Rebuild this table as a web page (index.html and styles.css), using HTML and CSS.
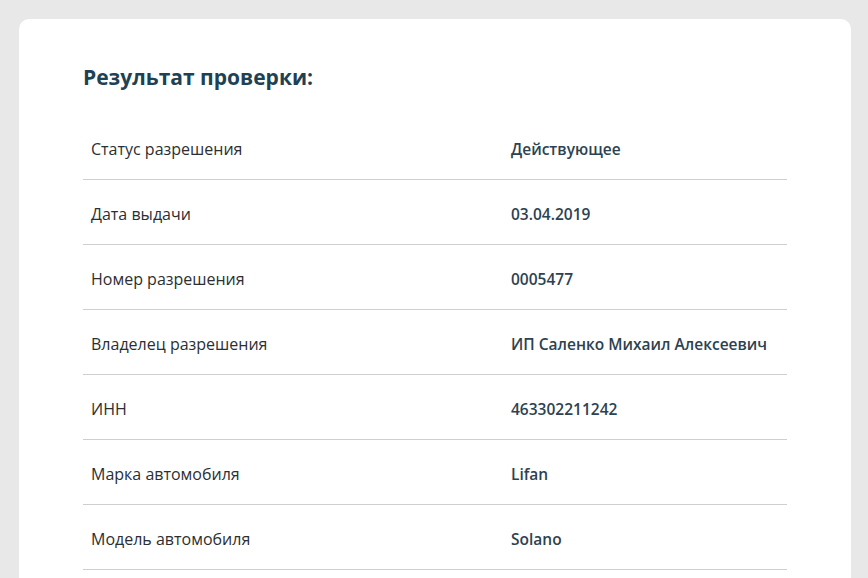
FILE: index.html
```html
<!DOCTYPE html>
<html lang="ru">
<head>
<meta charset="utf-8">
<link rel="stylesheet" href="styles.css">
</head>
<body>
<div class="card">
  <h2 class="title">Результат проверки:</h2>
  <div class="table">
    <div class="row"><div class="label">Статус разрешения</div><div class="value">Действующее</div></div>
    <div class="row"><div class="label">Дата выдачи</div><div class="value">03.04.2019</div></div>
    <div class="row"><div class="label">Номер разрешения</div><div class="value">0005477</div></div>
    <div class="row"><div class="label">Владелец разрешения</div><div class="value">ИП Саленко Михаил Алексеевич</div></div>
    <div class="row"><div class="label">ИНН</div><div class="value">463302211242</div></div>
    <div class="row"><div class="label">Марка автомобиля</div><div class="value">Lifan</div></div>
    <div class="row"><div class="label">Модель автомобиля</div><div class="value">Solano</div></div>
  </div>
</div>
</body>
</html>
```
FILE: styles.css
```css
html, body {
  margin: 0;
  padding: 0;
  background: #e8e8e8;
  font-family: "Open Sans", "Noto Sans", sans-serif;
}
body {
  padding: 19px 17px 0 19px;
  height: 578px;
  box-sizing: border-box;
  overflow: hidden;
}
.card {
  background: #fff;
  border-radius: 10px;
  padding: 44px 64px 40px 64px;
}
.title {
  margin: 0 0 24px 0;
  font-size: 21px;
  line-height: 28px;
  font-weight: 700;
  color: #1e4254;
}
.row {
  display: grid;
  grid-template-columns: 420px 1fr;
  height: 65px;
  align-items: center;
  border-bottom: 1px solid #cfcfcf;
  box-sizing: border-box;
  padding-top: 4px;
}
.label {
  padding-left: 8px;
  font-size: 16px;
  color: #2b2f33;
}
.value {
  padding-left: 8px;
  font-size: 15.5px;
  font-weight: 600;
  color: #2c4250;
}
```
